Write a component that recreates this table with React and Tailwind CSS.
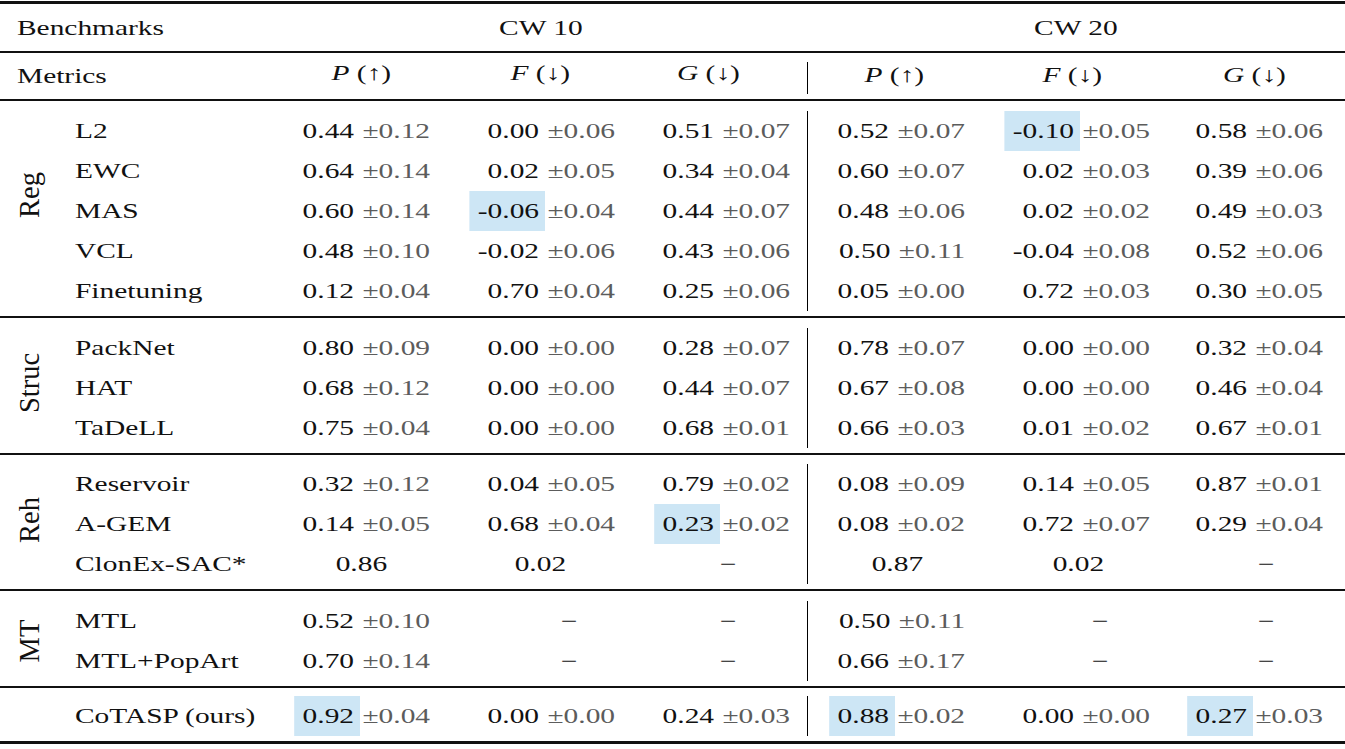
const serif = "font-['Liberation_Serif','DejaVu_Serif',serif]";

const cw10 = [
  { w: 'w-[172px]', pr: 'pr-[17px]', dash: 'pl-[16px]', head: 'pr-[0px]' },
  { w: 'w-[186px]', pr: 'pr-[18px]', dash: 'pl-[58px]', head: 'pr-[0px]' },
  { w: 'w-[174px]', pr: 'pr-[17px]', dash: 'pl-[16px]', head: 'pr-[24px]' },
];
const cw20 = [
  { w: 'w-[178px]', pr: 'pr-[21px]', dash: 'pl-[16px]', head: 'pr-[6px]' },
  { w: 'w-[185px]', pr: 'pr-[21px]', dash: 'pl-[42px]', head: 'pr-[12px]' },
  { w: 'w-[174px]', pr: 'pr-[22px]', dash: 'pl-[16px]', head: 'pr-[8px]' },
];

const sections = [
  {
    label: 'Reg',
    shift: 'mb-[32px]',
    pad: 'pt-[10px] pb-[5px]',
    rows: [
      ['L2', '0.44|0.12', '0.00|0.06', '0.51|0.07', '0.52|0.07', '!-0.10|0.05', '0.58|0.06'],
      ['EWC', '0.64|0.14', '0.02|0.05', '0.34|0.04', '0.60|0.07', '0.02|0.03', '0.39|0.06'],
      ['MAS', '0.60|0.14', '!-0.06|0.04', '0.44|0.07', '0.48|0.06', '0.02|0.02', '0.49|0.03'],
      ['VCL', '0.48|0.10', '-0.02|0.06', '0.43|0.06', '0.50|0.11', '-0.04|0.08', '0.52|0.06'],
      ['Finetuning', '0.12|0.04', '0.70|0.04', '0.25|0.06', '0.05|0.00', '0.72|0.03', '0.30|0.05'],
    ],
  },
  {
    label: 'Struc',
    shift: 'mb-[10px]',
    pad: 'pt-[10px] pb-[5px]',
    rows: [
      ['PackNet', '0.80|0.09', '0.00|0.00', '0.28|0.07', '0.78|0.07', '0.00|0.00', '0.32|0.04'],
      ['HAT', '0.68|0.12', '0.00|0.00', '0.44|0.07', '0.67|0.08', '0.00|0.00', '0.46|0.04'],
      ['TaDeLL', '0.75|0.04', '0.00|0.00', '0.68|0.01', '0.66|0.03', '0.01|0.02', '0.67|0.01'],
    ],
  },
  {
    label: 'Reh',
    shift: 'mb-[8px]',
    pad: 'pt-[9px] pb-[5px]',
    rows: [
      ['Reservoir', '0.32|0.12', '0.04|0.05', '0.79|0.02', '0.08|0.09', '0.14|0.05', '0.87|0.01'],
      ['A-GEM', '0.14|0.05', '0.68|0.04', '!0.23|0.02', '0.08|0.02', '0.72|0.07', '0.29|0.04'],
      ['ClonEx-SAC*', '0.86', '0.02', '-', '0.87', '0.02', '-'],
    ],
  },
  {
    label: 'MT',
    shift: '',
    pad: 'pt-[10px] pb-[5px]',
    rows: [
      ['MTL', '0.52|0.10', '-', '-', '0.50|0.11', '-', '-'],
      ['MTL+PopArt', '0.70|0.14', '-', '-', '0.66|0.17', '-', '-'],
    ],
  },
  {
    label: '',
    shift: '',
    pad: 'pt-[8px] pb-[5px]',
    rows: [
      ['CoTASP (ours)', '!0.92|0.04', '0.00|0.00', '0.24|0.03', '!0.88|0.02', '0.00|0.00', '!0.27|0.03'],
    ],
  },
];

function T({ children, origin = 'origin-center' }) {
  return <span className={`inline-block whitespace-nowrap scale-x-[1.4] ${origin}`}>{children}</span>;
}

function Cell({ value, col }) {
  if (value === '-') {
    return (
      <div className={`h-10 flex items-center justify-center ${col.w} ${col.dash}`}>
        <T>−</T>
      </div>
    );
  }
  if (!value.includes('|')) {
    return (
      <div className={`h-10 flex items-center justify-center ${col.w}`}>
        <T>{value}</T>
      </div>
    );
  }
  const hl = value.startsWith('!');
  const [mean, std] = value.replace('!', '').split('|');
  return (
    <div className={`h-10 flex items-center justify-end ${col.w} ${col.pr}`}>
      <T origin="origin-right">
        {hl ? (
          <span className="inline-block h-10 leading-10 bg-[#cde6f5] pl-[6px] pr-[4px]">{mean}</span>
        ) : (
          <span>{mean}</span>
        )}
        <span className={`text-[#5c5c5c] ${hl ? 'ml-[2px]' : 'ml-[6px]'}`}>±{std}</span>
      </T>
    </div>
  );
}

function Head({ sym, arrow, col }) {
  return (
    <div className={`h-full flex items-center justify-center pb-[6px] ${col.w} ${col.head}`}>
      <T>
        <i>{sym}</i> ({arrow})
      </T>
    </div>
  );
}

function Section({ section }) {
  return (
    <div className={`flex border-t-2 border-[#111] ${section.pad}`}>
      <div className="w-[60px] flex items-center justify-center">
        <span className={`inline-block -rotate-90 whitespace-nowrap text-[28.5px] ${section.shift}`}>{section.label}</span>
      </div>
      <div className="flex flex-col">
        {section.rows.map((row) => (
          <div key={row[0]} className="flex">
            <div className="w-[215px] h-10 flex items-center pl-[15px]">
              <T origin="origin-left">{row[0]}</T>
            </div>
            {cw10.map((col, i) => (
              <Cell key={i} value={row[i + 1]} col={col} />
            ))}
          </div>
        ))}
      </div>
      <div className="flex flex-col border-l border-black">
        {section.rows.map((row) => (
          <div key={row[0]} className="flex">
            {cw20.map((col, i) => (
              <Cell key={i} value={row[i + 4]} col={col} />
            ))}
          </div>
        ))}
      </div>
    </div>
  );
}

export default function App() {
  return (
    <div className={`w-[1345px] h-[749px] bg-white text-[#111] text-[21px] leading-[24px] pt-px ${serif}`}>
      <div className="border-t-[3px] border-b-[3px] border-[#111]">
        <div className="flex h-[47px] items-center">
          <div className="w-[275px] pl-[17px]">
            <T origin="origin-left">Benchmarks</T>
          </div>
          <div className="w-[532px] flex justify-center">
            <T>CW 10</T>
          </div>
          <div className="w-[538px] flex justify-center">
            <T>CW 20</T>
          </div>
        </div>
        <div className="flex h-[48px] border-t-2 border-[#111]">
          <div className="w-[275px] pl-[17px] flex items-center">
            <T origin="origin-left">Metrics</T>
          </div>
          <Head sym="P" arrow="↑" col={cw10[0]} />
          <Head sym="F" arrow="↓" col={cw10[1]} />
          <Head sym="G" arrow="↓" col={cw10[2]} />
          <div className="flex mt-[9px] mb-[5px] border-l border-black">
            <Head sym="P" arrow="↑" col={cw20[0]} />
            <Head sym="F" arrow="↓" col={cw20[1]} />
            <Head sym="G" arrow="↓" col={cw20[2]} />
          </div>
        </div>
        {sections.map((s, i) => (
          <Section key={i} section={s} />
        ))}
      </div>
    </div>
  );
}
